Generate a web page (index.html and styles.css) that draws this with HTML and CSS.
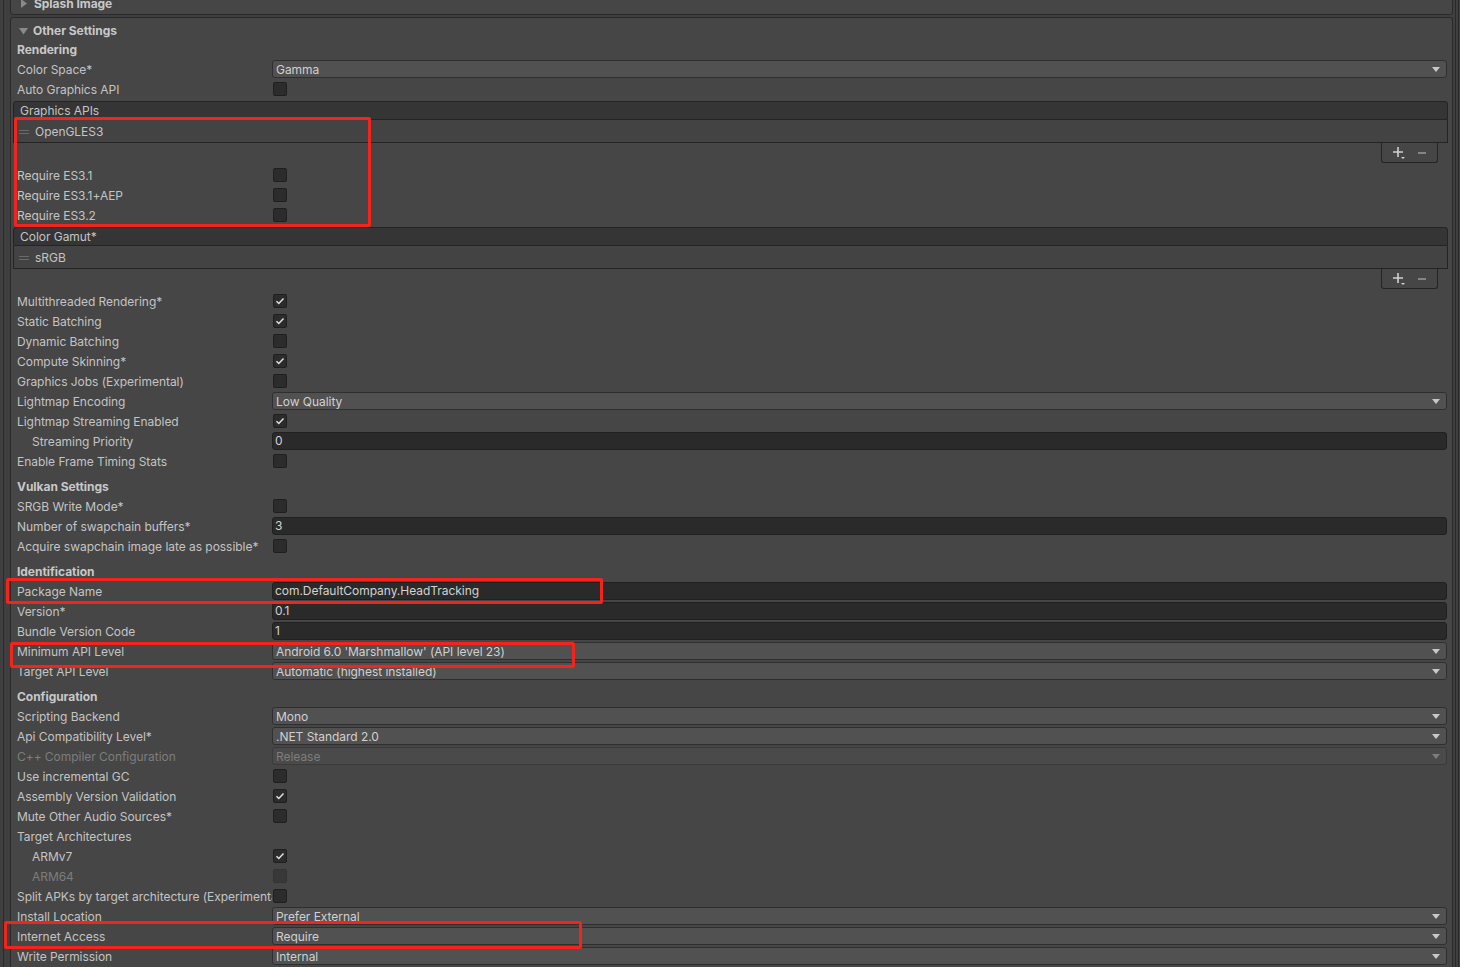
FILE: index.html
```html
<!DOCTYPE html>
<html>
<head>
<meta charset="utf-8">
<link rel="stylesheet" href="styles.css">
</head>
<body>
<div class="window">
  <div class="inspector">
    <div class="box splash">
      <div class="fold-title"><svg class="tri-right" width="8" height="9" viewBox="0 0 8 9"><polygon points="1,0 7,4.5 1,9" /></svg><span>Splash Image</span></div>
    </div>
    <div class="box other">
      <div class="fold-title"><svg class="tri-down" width="9" height="8" viewBox="0 0 9 8"><polygon points="0,1 9,1 4.5,7.5" /></svg><span>Other Settings</span></div>

      <div class="section first">Rendering</div>
      <div class="row"><div class="label">Color Space*</div><div class="field"><div class="dropdown"><span>Gamma</span><svg class="arrow" width="8" height="5" viewBox="0 0 8 5"><polygon points="0,0 8,0 4,5"/></svg></div></div></div>
      <div class="row"><div class="label">Auto Graphics API</div><div class="field"><div class="cb"></div></div></div>

      <div class="list">
        <div class="list-header">Graphics APIs</div>
        <div class="list-item"><span class="handle"></span><span>OpenGLES3</span></div>
        <div class="list-footer"><div class="footer-btns"><svg class="plus" width="14" height="14" viewBox="0 0 14 14"><path d="M5 1v10M0 6h10" /><polygon points="8,11 12,11 10,13"/></svg><svg class="minus" width="8" height="2" viewBox="0 0 8 2"><path d="M0 1h8"/></svg></div></div>
      </div>

      <div class="row"><div class="label">Require ES3.1</div><div class="field"><div class="cb"></div></div></div>
      <div class="row"><div class="label">Require ES3.1+AEP</div><div class="field"><div class="cb"></div></div></div>
      <div class="row"><div class="label">Require ES3.2</div><div class="field"><div class="cb"></div></div></div>

      <div class="list">
        <div class="list-header">Color Gamut*</div>
        <div class="list-item"><span class="handle"></span><span>sRGB</span></div>
        <div class="list-footer"><div class="footer-btns"><svg class="plus" width="14" height="14" viewBox="0 0 14 14"><path d="M5 1v10M0 6h10" /><polygon points="8,11 12,11 10,13"/></svg><svg class="minus" width="8" height="2" viewBox="0 0 8 2"><path d="M0 1h8"/></svg></div></div>
      </div>

      <div class="row"><div class="label">Multithreaded Rendering*</div><div class="field"><div class="cb"><svg width="12" height="12" viewBox="0 0 12 12"><path d="M2.5 6.2l2.3 2.3 4.7-5"/></svg></div></div></div>
      <div class="row"><div class="label">Static Batching</div><div class="field"><div class="cb"><svg width="12" height="12" viewBox="0 0 12 12"><path d="M2.5 6.2l2.3 2.3 4.7-5"/></svg></div></div></div>
      <div class="row"><div class="label">Dynamic Batching</div><div class="field"><div class="cb"></div></div></div>
      <div class="row"><div class="label">Compute Skinning*</div><div class="field"><div class="cb"><svg width="12" height="12" viewBox="0 0 12 12"><path d="M2.5 6.2l2.3 2.3 4.7-5"/></svg></div></div></div>
      <div class="row"><div class="label">Graphics Jobs (Experimental)</div><div class="field"><div class="cb"></div></div></div>
      <div class="row"><div class="label">Lightmap Encoding</div><div class="field"><div class="dropdown"><span>Low Quality</span><svg class="arrow" width="8" height="5" viewBox="0 0 8 5"><polygon points="0,0 8,0 4,5"/></svg></div></div></div>
      <div class="row"><div class="label">Lightmap Streaming Enabled</div><div class="field"><div class="cb"><svg width="12" height="12" viewBox="0 0 12 12"><path d="M2.5 6.2l2.3 2.3 4.7-5"/></svg></div></div></div>
      <div class="row indent"><div class="label">Streaming Priority</div><div class="field"><div class="textfield">0</div></div></div>
      <div class="row"><div class="label">Enable Frame Timing Stats</div><div class="field"><div class="cb"></div></div></div>

      <div class="section">Vulkan Settings</div>
      <div class="row"><div class="label">SRGB Write Mode*</div><div class="field"><div class="cb"></div></div></div>
      <div class="row"><div class="label">Number of swapchain buffers*</div><div class="field"><div class="textfield">3</div></div></div>
      <div class="row"><div class="label">Acquire swapchain image late as possible*</div><div class="field"><div class="cb"></div></div></div>

      <div class="section">Identification</div>
      <div class="row"><div class="label">Package Name</div><div class="field"><div class="textfield">com.DefaultCompany.HeadTracking</div></div></div>
      <div class="row"><div class="label">Version*</div><div class="field"><div class="textfield">0.1</div></div></div>
      <div class="row"><div class="label">Bundle Version Code</div><div class="field"><div class="textfield">1</div></div></div>
      <div class="row"><div class="label">Minimum API Level</div><div class="field"><div class="dropdown"><span>Android 6.0 'Marshmallow' (API level 23)</span><svg class="arrow" width="8" height="5" viewBox="0 0 8 5"><polygon points="0,0 8,0 4,5"/></svg></div></div></div>
      <div class="row"><div class="label">Target API Level</div><div class="field"><div class="dropdown"><span>Automatic (highest installed)</span><svg class="arrow" width="8" height="5" viewBox="0 0 8 5"><polygon points="0,0 8,0 4,5"/></svg></div></div></div>

      <div class="section">Configuration</div>
      <div class="row"><div class="label">Scripting Backend</div><div class="field"><div class="dropdown"><span>Mono</span><svg class="arrow" width="8" height="5" viewBox="0 0 8 5"><polygon points="0,0 8,0 4,5"/></svg></div></div></div>
      <div class="row"><div class="label">Api Compatibility Level*</div><div class="field"><div class="dropdown"><span>.NET Standard 2.0</span><svg class="arrow" width="8" height="5" viewBox="0 0 8 5"><polygon points="0,0 8,0 4,5"/></svg></div></div></div>
      <div class="row disabled"><div class="label">C++ Compiler Configuration</div><div class="field"><div class="dropdown"><span>Release</span><svg class="arrow" width="8" height="5" viewBox="0 0 8 5"><polygon points="0,0 8,0 4,5"/></svg></div></div></div>
      <div class="row"><div class="label">Use incremental GC</div><div class="field"><div class="cb"></div></div></div>
      <div class="row"><div class="label">Assembly Version Validation</div><div class="field"><div class="cb"><svg width="12" height="12" viewBox="0 0 12 12"><path d="M2.5 6.2l2.3 2.3 4.7-5"/></svg></div></div></div>
      <div class="row"><div class="label">Mute Other Audio Sources*</div><div class="field"><div class="cb"></div></div></div>
      <div class="row"><div class="label">Target Architectures</div><div class="field"></div></div>
      <div class="row indent"><div class="label">ARMv7</div><div class="field"><div class="cb"><svg width="12" height="12" viewBox="0 0 12 12"><path d="M2.5 6.2l2.3 2.3 4.7-5"/></svg></div></div></div>
      <div class="row indent disabled"><div class="label">ARM64</div><div class="field"><div class="cb"></div></div></div>
      <div class="row"><div class="label">Split APKs by target architecture (Experimental)</div><div class="field"><div class="cb"></div></div></div>
      <div class="row"><div class="label">Install Location</div><div class="field"><div class="dropdown"><span>Prefer External</span><svg class="arrow" width="8" height="5" viewBox="0 0 8 5"><polygon points="0,0 8,0 4,5"/></svg></div></div></div>
      <div class="row"><div class="label">Internet Access</div><div class="field"><div class="dropdown"><span>Require</span><svg class="arrow" width="8" height="5" viewBox="0 0 8 5"><polygon points="0,0 8,0 4,5"/></svg></div></div></div>
      <div class="row"><div class="label">Write Permission</div><div class="field"><div class="dropdown"><span>Internal</span><svg class="arrow" width="8" height="5" viewBox="0 0 8 5"><polygon points="0,0 8,0 4,5"/></svg></div></div></div>
    </div>
  </div>
  <div class="edge"><div class="edge-inner"></div></div>
</div>

<div class="mark mark-gles"></div>
<div class="mark mark-package"></div>
<div class="mark mark-minapi"></div>
<div class="mark mark-internet"></div>
</body>
</html>
```

FILE: styles.css
```css
* { box-sizing: border-box; }
html, body { margin: 0; padding: 0; }
body {
  background: #3f3f3f;
  font-family: Inter, "Noto Sans", sans-serif;
  font-size: 12px;
  letter-spacing: -0.04px;
  color: #c4c4c4;
  overflow: hidden;
  height: 967px;
  position: relative;
}
.window { display: flex; height: 967px; overflow: hidden; }
.inspector {
  flex: 1;
  min-width: 0;
  margin-left: 3px;
  border-left: 1px solid #2a2a2a;
  padding-left: 6px;
  overflow: hidden;
}
.edge { width: 7px; padding-left: 2px; display: flex; flex: none; }
.edge-inner { width: 4px; border-left: 1px solid #2a2a2a; border-right: 1px solid #2a2a2a; }

.box {
  background: #464646;
  border: 1px solid #2a2a2a;
  border-radius: 3px;
}
.splash { margin-top: -10px; height: 25px; padding-top: 3px; }
.other { margin-top: 2px; padding-top: 3px; height: 950px; overflow: hidden; border-bottom: none; border-radius: 3px 3px 0 0; }

.fold-title {
  height: 19px;
  display: flex;
  align-items: center;
  padding-left: 8px;
  font-weight: bold;
  color: #c8c8c8;
}
.fold-title svg { fill: #8a8a8a; margin-right: 6px; flex: none; }
.tri-right { margin-left: 1px; }
.tri-down { margin-left: 0; margin-right: 5px !important; }

.section {
  height: 19px;
  line-height: 19px;
  margin-top: 6px;
  padding-left: 6px;
  font-weight: bold;
  color: #c8c8c8;
}
.section.first { margin-top: 0; }

.row {
  height: 20px;
  display: flex;
  align-items: center;
  padding: 0 5px 0 6px;
}
.label {
  width: 255px;
  flex: none;
  white-space: nowrap;
  overflow: hidden;
}
.indent .label { padding-left: 15px; }
.field { flex: 1; min-width: 0; display: flex; align-items: center; }

.dropdown {
  flex: 1;
  height: 18px;
  background: #515151;
  border: 1px solid #2f2f2f;
  border-radius: 3px;
  display: flex;
  align-items: center;
  padding: 0 6px 0 3px;
  color: #d0d0d0;
}
.dropdown .arrow { margin-left: auto; fill: #c8c8c8; }
.textfield {
  flex: 1;
  height: 18px;
  background: #2a2a2a;
  border: 1px solid #202020;
  border-radius: 3px;
  padding-left: 2px;
  line-height: 16px;
  color: #d2d2d2;
}
.cb {
  width: 14px;
  height: 14px;
  margin-left: 1px;
  background: #2c2c2c;
  border: 1px solid #1f1f1f;
  border-radius: 2px;
  display: flex;
  align-items: center;
  justify-content: center;
}
.cb svg path { fill: none; stroke: #e0e0e0; stroke-width: 1.5; }

.disabled .label { color: #7d7d7d; }
.disabled .dropdown { background: #4a4a4a; border-color: #3a3a3a; color: #7d7d7d; }
.disabled .dropdown .arrow { fill: #7d7d7d; }
.disabled .cb { background: #383838; border-color: #333; }

.list { margin: 2px 4px 2px 2px; }
.list-header {
  height: 19px;
  background: #353535;
  border: 1px solid #242424;
  border-radius: 3px 3px 0 0;
  padding-left: 6px;
  line-height: 17px;
}
.list-item {
  height: 23px;
  background: #434343;
  border: 1px solid #242424;
  border-top: none;
  display: flex;
  align-items: center;
  padding-left: 5px;
}
.handle {
  width: 10px;
  height: 4px;
  border-top: 1px solid #6a6a6a;
  border-bottom: 1px solid #6a6a6a;
  margin-right: 6px;
  margin-top: 2px;
}
.list-footer { display: flex; justify-content: flex-end; padding-right: 10px; }
.footer-btns {
  width: 57px;
  height: 20px;
  border: 1px solid #242424;
  border-top: none;
  border-radius: 0 0 3px 3px;
  background: #464646;
  display: flex;
  align-items: center;
  padding-left: 11px;
}
.plus path { stroke: #d0d0d0; stroke-width: 1.6; fill: none; }
.plus polygon { fill: #d0d0d0; }
.minus { margin-left: 11px; }
.minus path { stroke: #858585; stroke-width: 2; }

.mark {
  position: absolute;
  border: 3px solid #f2241c;
  border-radius: 2px;
}
.mark-gles { left: 14px; top: 117px; width: 357px; height: 110px; }
.mark-package { left: 6px; top: 578px; width: 597px; height: 26px; }
.mark-minapi { left: 10px; top: 642px; width: 565px; height: 26px; }
.mark-internet { left: 4px; top: 921px; width: 578px; height: 28px; }
```
